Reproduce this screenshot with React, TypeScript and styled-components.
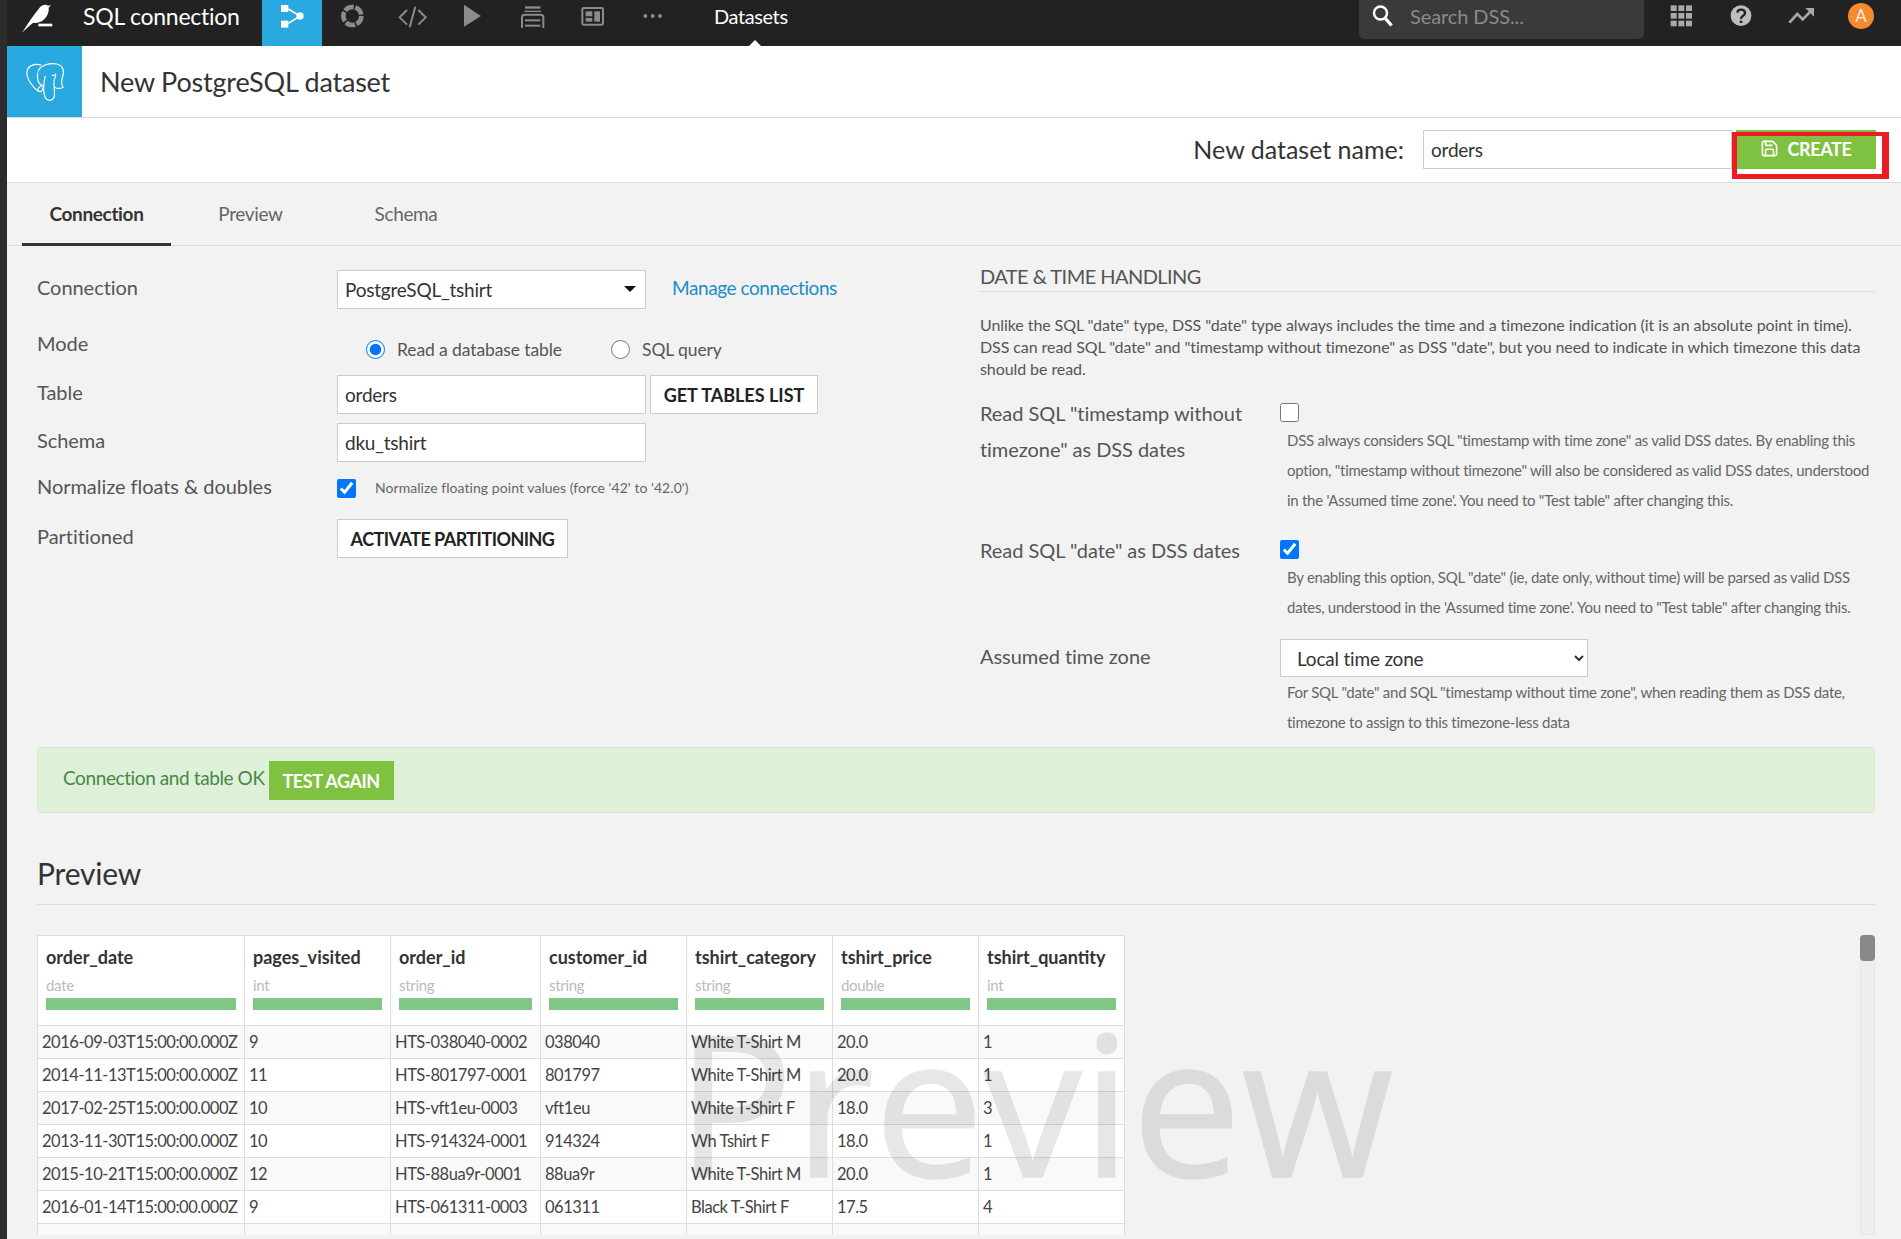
import React from 'react';
import styled, { createGlobalStyle } from 'styled-components';
import { Save } from 'lucide-react';

const GlobalStyle = createGlobalStyle`
  html, body {
    margin: 0;
    padding: 0;
    background: #f2f2f2;
    overflow: hidden;
  }
  body {
    font-family: Lato, "Noto Sans", "Liberation Sans", sans-serif;
    color: #333;
  }
  * {
    box-sizing: border-box;
  }
`;

const Shell = styled.div`
  display: flex;
  width: 1901px;
  height: 1239px;
  overflow: hidden;
  background: #f2f2f2;
`;

const LeftStrip = styled.div`
  width: 7px;
  flex: none;
  background: #2c2c2c;
`;

const Main = styled.div`
  flex: 1;
  min-width: 0;
  display: flex;
  flex-direction: column;
`;

const TopBar = styled.header`
  height: 46px;
  flex: none;
  display: flex;
  background: #222;
  color: #fff;
`;

const LogoCell = styled.div`
  width: 76px;
  display: flex;
  align-items: flex-start;
  padding: 2px 0 0 13px;
`;

const ProjectName = styled.div`
  width: 179px;
  font-size: 23px;
  line-height: 32px;
  letter-spacing: -0.25px;
`;

const NavItem = styled.div<{ $active?: boolean }>`
  width: 60px;
  height: 46px;
  background: ${props => (props.$active ? '#29a9e0' : 'transparent')};
  svg {
    display: block;
  }
`;

const NavLabel = styled.div`
  position: relative;
  margin-left: 32px;
  font-size: 20px;
  line-height: 32px;
  letter-spacing: -0.4px;

  &::after {
    content: '';
    position: absolute;
    left: 35px;
    bottom: 0;
    border-left: 6px solid transparent;
    border-right: 6px solid transparent;
    border-bottom: 6px solid #fff;
  }
`;

const SearchBox = styled.div`
  margin-left: auto;
  width: 285px;
  height: 39px;
  display: flex;
  align-items: center;
  gap: 16px;
  padding: 0 0 7px 13px;
  background: #3a3a3a;
  border-radius: 0 0 6px 6px;
  color: #8a8a8a;
  font-size: 20px;
  letter-spacing: -0.1px;
`;

const IconGroup = styled.div`
  display: flex;
  margin-left: 7px;
  margin-right: 10px;
`;

const AvatarCell = styled.div`
  width: 60px;
  height: 32px;
  display: flex;
  align-items: center;
  justify-content: center;
`;

const Avatar = styled.div`
  width: 26px;
  height: 26px;
  border-radius: 50%;
  background: #f58a2e;
  color: #fdeee0;
  font-size: 17px;
  line-height: 26px;
  text-align: center;
`;

const PageHeader = styled.div`
  height: 72px;
  flex: none;
  display: flex;
  align-items: center;
  background: #fff;
  border-bottom: 1px solid #ddd;
`;

const HeaderTile = styled.div`
  width: 75px;
  height: 71px;
  display: flex;
  align-items: center;
  justify-content: center;
  background: #29a9e0;
`;

const PageTitle = styled.h1`
  margin: 0 0 0 18px;
  font-size: 27px;
  font-weight: 400;
  letter-spacing: -0.2px;
  color: #333;
`;

const NameRow = styled.div`
  height: 65px;
  flex: none;
  display: flex;
  justify-content: flex-end;
  padding: 12px 25px 0 0;
  background: #fff;
  border-bottom: 1px solid #ddd;
`;

const NameLabel = styled.label`
  margin-right: 19px;
  font-size: 25px;
  line-height: 39px;
  color: #333;
`;

const NameInputWrap = styled.div`
  position: relative;
  display: flex;
  gap: 4px;
`;

const TextField = styled.div<{ $width: number }>`
  width: ${props => props.$width}px;
  height: 39px;
  padding: 0 7px;
  background: #fff;
  border: 1px solid #ccc;
  font-size: 19px;
  line-height: 37px;
  letter-spacing: -0.22px;
  color: #333;
`;

const CreateButton = styled.button`
  width: 140px;
  height: 39px;
  display: flex;
  align-items: center;
  justify-content: center;
  gap: 8px;
  padding: 0 0 2px;
  border: none;
  background: #7fc241;
  color: #fff;
  font-family: inherit;
  font-size: 18px;
  font-weight: 700;
  letter-spacing: -0.35px;
`;

const RedMark = styled.div`
  position: absolute;
  left: 309px;
  top: 2px;
  width: 157px;
  height: 47px;
  border-style: solid;
  border-color: #ed1c24;
  border-width: 4px 7px 5px 5px;
  pointer-events: none;
`;

const TabBar = styled.nav`
  height: 63px;
  flex: none;
  display: flex;
  padding-left: 15px;
  border-bottom: 1px solid #ddd;
`;

const Tab = styled.div<{ $width: number; $active?: boolean }>`
  width: ${props => props.$width}px;
  height: 63px;
  padding-top: 15px;
  text-align: center;
  font-size: 19px;
  line-height: 32px;
  letter-spacing: -0.35px;
  font-weight: ${props => (props.$active ? 700 : 400)};
  color: ${props => (props.$active ? '#333' : '#666')};
  border-bottom: 3px solid ${props => (props.$active ? '#333' : 'transparent')};
`;

const Content = styled.div`
  flex: 1;
  min-height: 0;
  padding: 0 26px 0 30px;
`;

const Columns = styled.div`
  display: grid;
  grid-template-columns: 943px 1fr;
  height: 501px;
`;

const FormColumn = styled.div`
  padding-top: 24px;
`;

const FormRow = styled.div<{ $top?: number }>`
  display: grid;
  grid-template-columns: 300px 1fr;
  align-items: center;
  height: 39px;
  margin-top: ${props => props.$top ?? 0}px;
`;

const FieldLabel = styled.div`
  font-size: 20px;
  line-height: 36px;
  letter-spacing: -0.05px;
  color: #555;
`;

const FormLabel = styled(FieldLabel)`
  line-height: 30px;
  margin-bottom: 5px;
`;

const DateLabel = styled(FieldLabel)`
  margin-top: -1px;
`;

const Controls = styled.div`
  display: flex;
  align-items: center;
`;

const FakeSelect = styled(TextField)`
  position: relative;

  &::after {
    content: '';
    position: absolute;
    right: 9px;
    top: 15px;
    border-left: 6px solid transparent;
    border-right: 6px solid transparent;
    border-top: 6px solid #111;
  }
`;

const ManageLink = styled.a`
  margin: 0 0 5px 26px;
  font-size: 19px;
  letter-spacing: -0.42px;
  color: #1d8cc9;
`;

const RadioOption = styled.label<{ $left: number }>`
  display: flex;
  align-items: center;
  gap: 12px;
  margin-left: ${props => props.$left}px;
  margin-top: 8px;
  font-size: 17.5px;
  letter-spacing: -0.1px;
  color: #555;
`;

const Radio = styled.input.attrs({ type: 'radio' })`
  width: 19px;
  height: 19px;
  margin: 0;
`;

const Check = styled.input.attrs({ type: 'checkbox' })`
  display: block;
  width: 19px;
  height: 19px;
  margin: 0;
`;

const PlainButton = styled.button<{ $width: number; $left?: number; $spacing?: number }>`
  width: ${props => props.$width}px;
  height: 39px;
  margin-left: ${props => props.$left ?? 0}px;
  padding: 0;
  border: 1px solid #ccc;
  background: #fff;
  color: #222;
  font-family: inherit;
  font-size: 18px;
  font-weight: 700;
  letter-spacing: ${props => props.$spacing ?? 0}px;
`;

const CheckNote = styled.span`
  margin: 0 0 3px 19px;
  font-size: 14px;
  letter-spacing: 0.05px;
  color: #666;
`;

const DateColumn = styled.section`
  padding-top: 15px;
`;

const SectionTitle = styled.h3`
  margin: 0;
  height: 31px;
  border-bottom: 1px solid #ddd;
  font-size: 20px;
  font-weight: 400;
  line-height: 30px;
  letter-spacing: -0.55px;
  color: #555;
`;

const Intro = styled.p`
  margin: 22px 0 16px;
  font-size: 16px;
  line-height: 22px;
  letter-spacing: -0.08px;
  color: #555;
`;

const DateRow = styled.div<{ $top?: number }>`
  display: grid;
  grid-template-columns: 300px 1fr;
  margin-top: ${props => props.$top ?? 0}px;
`;

const CheckHolder = styled.div`
  padding-top: 7px;
  height: 26px;
`;

const HelpText = styled.div<{ $top?: number }>`
  margin-top: ${props => props.$top ?? 3}px;
  padding-left: 7px;
  font-size: 15px;
  line-height: 30px;
  letter-spacing: -0.27px;
  color: #666;
`;

const ZoneSelect = styled.select`
  display: block;
  width: 308px;
  height: 38px;
  padding: 0 12px;
  background: #fff;
  border: 1px solid #ccc;
  border-radius: 0;
  font-family: inherit;
  font-size: 19px;
  letter-spacing: -0.2px;
  color: #333;
`;

const StatusAlert = styled.div`
  height: 66px;
  display: flex;
  align-items: flex-start;
  padding: 13px 25px;
  background: #dff0d8;
  border: 1px solid #d6e9c6;
  border-radius: 4px;
  color: #468847;
  font-size: 19px;
  line-height: 34px;
  letter-spacing: -0.4px;
`;

const GreenButton = styled.button`
  width: 125px;
  height: 39px;
  margin-left: 4px;
  padding: 0;
  border: none;
  background: #7fc241;
  color: #fff;
  font-family: inherit;
  font-size: 18px;
  font-weight: 700;
  letter-spacing: -0.45px;
`;

const PreviewTitle = styled.h2`
  margin: 40px 0 30px;
  height: 52px;
  padding-top: 0;
  border-bottom: 1px solid #ddd;
  font-size: 30px;
  font-weight: 400;
  line-height: 40px;
  letter-spacing: -0.2px;
  color: #333;
`;

const TableViewport = styled.div`
  position: relative;
  display: flex;
  justify-content: space-between;
  height: 300px;
  overflow: hidden;
`;

const DataTable = styled.table`
  width: 1087px;
  height: 321px;
  flex: none;
  table-layout: fixed;
  border-collapse: collapse;
  background: #fff;
`;

const ColumnHead = styled.th<{ $width: number }>`
  width: ${props => props.$width}px;
  height: 90px;
  padding: 9px 8px 0;
  vertical-align: top;
  text-align: left;
  border: 1px solid #ddd;
  background: #fff;
  font-weight: 400;
`;

const ColumnName = styled.div`
  font-size: 18px;
  font-weight: 700;
  line-height: 24px;
  color: #333;
`;

const ColumnType = styled.div`
  margin-top: 5px;
  font-size: 15px;
  line-height: 22px;
  letter-spacing: -0.3px;
  color: #bbb;
`;

const QualityBar = styled.div`
  height: 12px;
  margin-top: 2px;
  background: #80c785;
`;

const DataRow = styled.tr<{ $odd: boolean }>`
  background: ${props => (props.$odd ? '#f9f9f9' : '#fff')};
`;

const DataCell = styled.td`
  height: 33px;
  padding: 0 4px;
  border: 1px solid #ddd;
  font-size: 16.5px;
  letter-spacing: -0.47px;
  color: #444;
  white-space: nowrap;
  overflow: hidden;
`;

const Watermark = styled.div`
  position: absolute;
  left: 639px;
  top: 68px;
  font-family: "Open Sans", sans-serif;
  font-size: 196px;
  line-height: 1;
  color: #000;
  -webkit-text-stroke: 1.5px #000;
  opacity: 0.09;
  pointer-events: none;
`;

const ScrollTrack = styled.div`
  position: relative;
  width: 15px;
  flex: none;
  background: #eee;
  border: 1px solid #e4e4e4;
  border-radius: 4px;

  &::before {
    content: '';
    position: absolute;
    left: -1px;
    right: -1px;
    top: -1px;
    height: 26px;
    border-radius: 4px;
    background: #888;
  }
`;

const ICON = '#8b8b8b';

const columns = [
  { name: 'order_date', type: 'date', width: 207 },
  { name: 'pages_visited', type: 'int', width: 146 },
  { name: 'order_id', type: 'string', width: 150 },
  { name: 'customer_id', type: 'string', width: 146 },
  { name: 'tshirt_category', type: 'string', width: 146 },
  { name: 'tshirt_price', type: 'double', width: 146 },
  { name: 'tshirt_quantity', type: 'int', width: 146 },
];

const rows = [
  ['2016-09-03T15:00:00.000Z', '9', 'HTS-038040-0002', '038040', 'White T-Shirt M', '20.0', '1'],
  ['2014-11-13T15:00:00.000Z', '11', 'HTS-801797-0001', '801797', 'White T-Shirt M', '20.0', '1'],
  ['2017-02-25T15:00:00.000Z', '10', 'HTS-vft1eu-0003', 'vft1eu', 'White T-Shirt F', '18.0', '3'],
  ['2013-11-30T15:00:00.000Z', '10', 'HTS-914324-0001', '914324', 'Wh Tshirt F', '18.0', '1'],
  ['2015-10-21T15:00:00.000Z', '12', 'HTS-88ua9r-0001', '88ua9r', 'White T-Shirt M', '20.0', '1'],
  ['2016-01-14T15:00:00.000Z', '9', 'HTS-061311-0003', '061311', 'Black T-Shirt F', '17.5', '4'],
  ['', '', '', '', '', '', ''],
];

const Bird = () => (
  <svg width="40" height="34" viewBox="60 6 120 102">
    <path
      fill="#fff"
      d="M66 98 C84 70 100 46 118 24 C126 14 138 12 144 17 L153 16 L146 23 C148 40 138 58 120 66 L108 69 L100 68 C88 77 76 88 66 98Z"
    />
    <rect x="115" y="71" width="42" height="8" fill="#fff" />
  </svg>
);

const Elephant = () => (
  <svg width="40" height="40" viewBox="72 172 124 124" fill="none" stroke="#fff" strokeWidth="3.5">
    <path d="M122 181 C100 176 78 184 78 205 C78 225 95 250 112 262 C122 268 130 258 128 245" />
    <path d="M112 202 C120 180 150 175 170 178 C190 182 195 200 188 220 C184 232 184 240 190 250 C180 256 170 254 163 250" />
    <path d="M135 215 C128 240 128 270 136 285 C145 295 160 292 163 278 C165 265 160 245 162 230 C163 220 172 215 165 208" />
    <path d="M112 205 C108 220 112 240 125 245 C115 250 108 255 115 262" />
    <path d="M155 215 c3 -3 6 -3 8 0" />
  </svg>
);

const NavIcon = ({ x, children }: { x: number; children: React.ReactNode }) => (
  <svg width="60" height="46" viewBox={`${x} 0 180 138`}>
    {children}
  </svg>
);

const App: React.FC = () => (
  <>
    <GlobalStyle />
    <Shell>
      <LeftStrip />
      <Main>
        <TopBar>
          <LogoCell>
            <Bird />
          </LogoCell>
          <ProjectName>SQL connection</ProjectName>
          <NavItem $active>
            <NavIcon x={6}>
              <path d="M85 27 L120 48 L85 70" fill="none" stroke="#fff" strokeWidth="5" />
              <rect x="63" y="15" width="22" height="21" fill="#fff" />
              <rect x="63" y="62" width="22" height="21" fill="#fff" />
              <circle cx="120" cy="48" r="11" fill="#fff" />
            </NavIcon>
          </NavItem>
          <NavItem>
            <NavIcon x={186}>
              <circle
                cx="277"
                cy="48"
                r="27"
                fill="none"
                stroke={ICON}
                strokeWidth="14"
                strokeDasharray="28.9 5"
              />
            </NavIcon>
          </NavItem>
          <NavItem>
            <NavIcon x={366}>
              <path d="M441 30 L419 52 L441 74 M475 30 L497 52 L475 74 M466 20 L449 82" fill="none" stroke={ICON} strokeWidth="6" />
            </NavIcon>
          </NavItem>
          <NavItem>
            <NavIcon x={546}>
              <polygon points="612,14 663,48 612,80" fill={ICON} />
            </NavIcon>
          </NavItem>
          <NavItem>
            <NavIcon x={-54}>
              <path d="M6 84 V52 Q6 44 14 44 H62 Q70 44 70 52 V84" fill="none" stroke={ICON} strokeWidth="6" />
              <rect x="15" y="19" width="46" height="7" fill={ICON} />
              <rect x="13" y="32" width="50" height="4" fill={ICON} />
              <rect x="15" y="58" width="46" height="6" fill={ICON} />
              <rect x="15" y="74" width="46" height="6" fill={ICON} />
            </NavIcon>
          </NavItem>
          <NavItem>
            <NavIcon x={126}>
              <rect x="187" y="24" width="62" height="50" rx="4" fill="none" stroke={ICON} strokeWidth="6" />
              <rect x="197" y="34" width="20" height="15" fill={ICON} />
              <rect x="197" y="54" width="20" height="11" fill={ICON} />
              <rect x="223" y="34" width="17" height="31" fill={ICON} />
            </NavIcon>
          </NavItem>
          <NavItem>
            <NavIcon x={306}>
              <circle cx="376" cy="48" r="6" fill={ICON} />
              <circle cx="398" cy="48" r="6" fill={ICON} />
              <circle cx="420" cy="48" r="6" fill={ICON} />
            </NavIcon>
          </NavItem>
          <NavLabel>Datasets</NavLabel>
          <SearchBox>
            <svg width="22" height="22" viewBox="0 0 22 22" fill="none" stroke="#fff">
              <circle cx="8.5" cy="8" r="6.5" strokeWidth="2.4" />
              <path d="M13 13 L19.5 20.5" strokeWidth="3.4" />
            </svg>
            Search DSS...
          </SearchBox>
          <IconGroup>
            <NavItem>
              <NavIcon x={-27}>
                {[0, 1, 2].flatMap(r =>
                  [0, 1, 2].map(c => (
                    <rect key={`${r}${c}`} x={32 + c * 23} y={16 + r * 23} width="18" height="17" fill="#a8a8a8" />
                  )),
                )}
              </NavIcon>
            </NavItem>
            <NavItem>
              <NavIcon x={153}>
                <circle cx="243" cy="47" r="31" fill="#bdbdbd" />
                <path d="M232 38 C233 26 255 26 255 39 C255 48 243 47 243 57" fill="none" stroke="#222" strokeWidth="7" />
                <rect x="239" y="62" width="8" height="7" fill="#222" />
              </NavIcon>
            </NavItem>
            <NavItem>
              <NavIcon x={333}>
                <path d="M388 68 L412 42 L428 58 L456 30" fill="none" stroke="#a8a8a8" strokeWidth="8" />
                <polygon points="436,24 462,24 462,50" fill="#a8a8a8" />
              </NavIcon>
            </NavItem>
            <AvatarCell>
              <Avatar>A</Avatar>
            </AvatarCell>
          </IconGroup>
        </TopBar>

        <PageHeader>
          <HeaderTile>
            <Elephant />
          </HeaderTile>
          <PageTitle>New PostgreSQL dataset</PageTitle>
        </PageHeader>

        <NameRow>
          <NameLabel>New dataset name:</NameLabel>
          <NameInputWrap>
            <TextField $width={309}>orders</TextField>
            <CreateButton>
              <Save size={19} strokeWidth={2} />
              CREATE
            </CreateButton>
            <RedMark />
          </NameInputWrap>
        </NameRow>

        <TabBar>
          <Tab $width={149} $active>
            Connection
          </Tab>
          <Tab $width={159}>Preview</Tab>
          <Tab $width={152}>Schema</Tab>
        </TabBar>

        <Content>
          <Columns>
            <FormColumn>
              <FormRow>
                <FormLabel>Connection</FormLabel>
                <Controls>
                  <FakeSelect $width={309}>PostgreSQL_tshirt</FakeSelect>
                  <ManageLink>Manage connections</ManageLink>
                </Controls>
              </FormRow>
              <FormRow $top={17}>
                <FormLabel>Mode</FormLabel>
                <Controls>
                  <RadioOption $left={29}>
                    <Radio name="mode" defaultChecked />
                    Read a database table
                  </RadioOption>
                  <RadioOption $left={49}>
                    <Radio name="mode" />
                    SQL query
                  </RadioOption>
                </Controls>
              </FormRow>
              <FormRow $top={10}>
                <FormLabel>Table</FormLabel>
                <Controls>
                  <TextField $width={309}>orders</TextField>
                  <PlainButton $width={168} $left={4}>
                    GET TABLES LIST
                  </PlainButton>
                </Controls>
              </FormRow>
              <FormRow $top={9}>
                <FormLabel>Schema</FormLabel>
                <Controls>
                  <TextField $width={309}>dku_tshirt</TextField>
                </Controls>
              </FormRow>
              <FormRow $top={7}>
                <FormLabel>Normalize floats &amp; doubles</FormLabel>
                <Controls>
                  <Check defaultChecked />
                  <CheckNote>Normalize floating point values (force '42' to '42.0')</CheckNote>
                </Controls>
              </FormRow>
              <FormRow $top={11}>
                <FormLabel>Partitioned</FormLabel>
                <Controls>
                  <PlainButton $width={231} $spacing={-0.55}>
                    ACTIVATE PARTITIONING
                  </PlainButton>
                </Controls>
              </FormRow>
            </FormColumn>

            <DateColumn>
              <SectionTitle>DATE &amp; TIME HANDLING</SectionTitle>
              <Intro>
                Unlike the SQL "date" type, DSS "date" type always includes the time and a timezone indication (it is an absolute point in time).
                <br />
                DSS can read SQL "date" and "timestamp without timezone" as DSS "date", but you need to indicate in which timezone this data
                <br />
                should be read.
              </Intro>
              <DateRow>
                <DateLabel>
                  Read SQL "timestamp without
                  <br />
                  timezone" as DSS dates
                </DateLabel>
                <div>
                  <CheckHolder>
                    <Check />
                  </CheckHolder>
                  <HelpText>
                    DSS always considers SQL "timestamp with time zone" as valid DSS dates. By enabling this
                    <br />
                    option, "timestamp without timezone" will also be considered as valid DSS dates, understood
                    <br />
                    in the 'Assumed time zone'. You need to "Test table" after changing this.
                  </HelpText>
                </div>
              </DateRow>
              <DateRow $top={18}>
                <DateLabel>Read SQL "date" as DSS dates</DateLabel>
                <div>
                  <CheckHolder>
                    <Check defaultChecked />
                  </CheckHolder>
                  <HelpText>
                    By enabling this option, SQL "date" (ie, date only, without time) will be parsed as valid DSS
                    <br />
                    dates, understood in the 'Assumed time zone'. You need to "Test table" after changing this.
                  </HelpText>
                </div>
              </DateRow>
              <DateRow $top={17}>
                <DateLabel>Assumed time zone</DateLabel>
                <div>
                  <ZoneSelect defaultValue="local">
                    <option value="local">Local time zone</option>
                  </ZoneSelect>
                  <HelpText $top={0}>
                    For SQL "date" and SQL "timestamp without time zone", when reading them as DSS date,
                    <br />
                    timezone to assign to this timezone-less data
                  </HelpText>
                </div>
              </DateRow>
            </DateColumn>
          </Columns>

          <StatusAlert>
            Connection and table OK
            <GreenButton>TEST AGAIN</GreenButton>
          </StatusAlert>

          <PreviewTitle>Preview</PreviewTitle>

          <TableViewport>
            <DataTable>
              <thead>
                <tr>
                  {columns.map(col => (
                    <ColumnHead key={col.name} $width={col.width}>
                      <ColumnName>{col.name}</ColumnName>
                      <ColumnType>{col.type}</ColumnType>
                      <QualityBar />
                    </ColumnHead>
                  ))}
                </tr>
              </thead>
              <tbody>
                {rows.map((row, i) => (
                  <DataRow key={i} $odd={i % 2 === 0}>
                    {row.map((value, j) => (
                      <DataCell key={j}>{value}</DataCell>
                    ))}
                  </DataRow>
                ))}
              </tbody>
            </DataTable>
            <Watermark>Preview</Watermark>
            <ScrollTrack />
          </TableViewport>
        </Content>
      </Main>
    </Shell>
  </>
);

export default App;
